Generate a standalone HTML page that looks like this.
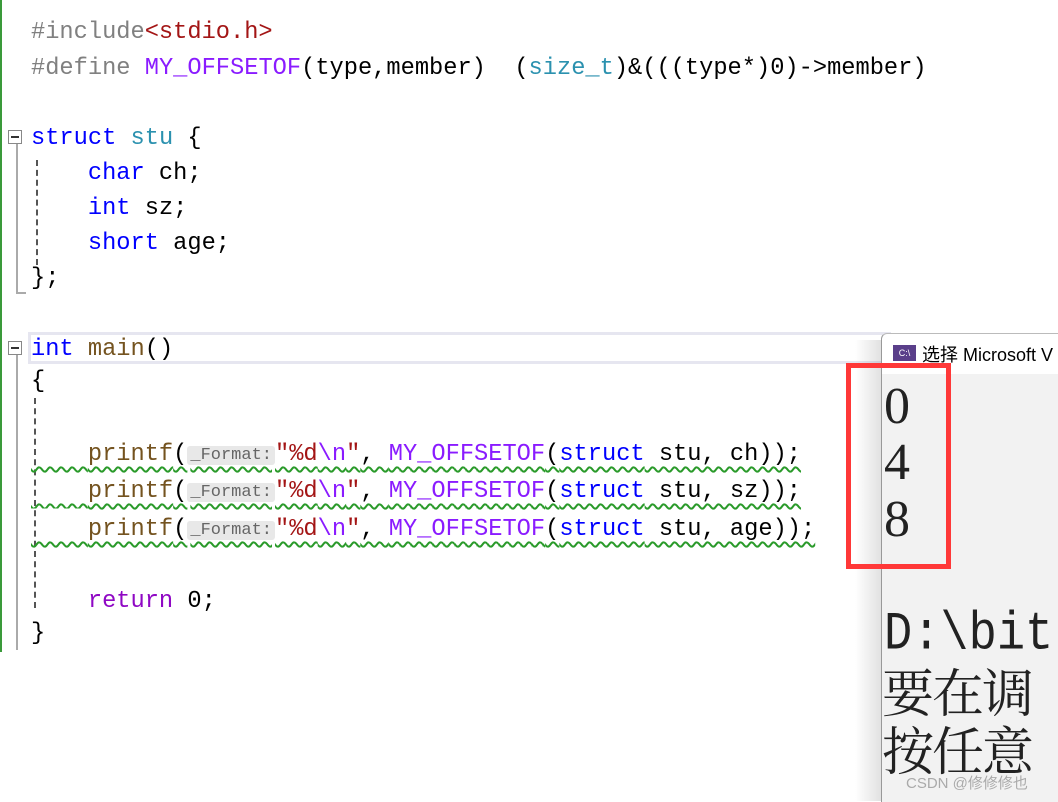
<!DOCTYPE html>
<html><head><meta charset="utf-8"><style>
body{margin:0;width:1058px;height:801px;background:#fff;position:relative;overflow:hidden;font-family:"Liberation Mono","Noto Sans CJK SC",monospace;}
.l{position:absolute;left:31px;font-size:23.7px;line-height:34px;white-space:pre;color:#000;}
.g{color:#808080}.s{color:#a31515}.m{color:#8a1bff}.k{color:#0000ff}.t{color:#2b91af}.f{color:#74531f}.r{color:#8f08c4}
.h{background:#e8e8e8;color:#666;font-size:17px;border-radius:3px;padding:0 3px;vertical-align:1px}
.sq{text-decoration:underline wavy #2a9a2a;text-decoration-thickness:1.5px;text-underline-offset:6px}
.fold{position:absolute;left:8px;width:14px;height:14px;border:1px solid #888;box-sizing:border-box;background:#fff}
.fold:after{content:"";position:absolute;left:2px;right:2px;top:5px;height:2px;background:#333}
.c{position:absolute;left:884px;color:#222;white-space:nowrap}
.n{font:52px/58px 'Liberation Serif',serif}
.z{font:52px/58px 'Noto Serif CJK SC','Noto Sans CJK SC',serif}
</style></head><body>
<div style="position:absolute;left:0;top:0;width:2px;height:652px;background:#3a9a3a"></div>
<div class="l" style="top:16px"><span class="g">#include</span><span class="s">&lt;stdio.h&gt;</span></div>
<div class="l" style="top:52px"><span class="g">#define</span> <span class="m">MY_OFFSETOF</span>(type,member)  (<span class="t">size_t</span>)&amp;(((type*)0)-&gt;member)</div>
<div class="fold" style="top:130px"></div>
<div style="position:absolute;left:16px;top:144px;width:2px;height:150px;background:#aaa"></div>
<div style="position:absolute;left:16px;top:292px;width:10px;height:2px;background:#aaa"></div>
<div style="position:absolute;left:36px;top:160px;height:105px;border-left:2px dashed #555"></div>
<div class="l" style="top:122px"><span class="k">struct</span> <span class="t">stu</span> {</div>
<div class="l" style="top:157px">    <span class="k">char</span> ch;</div>
<div class="l" style="top:192px">    <span class="k">int</span> sz;</div>
<div class="l" style="top:227px">    <span class="k">short</span> age;</div>
<div class="l" style="top:262px">};</div>
<div style="position:absolute;left:28px;top:332px;width:860px;height:26px;border:3px solid #e6e6f0;border-right:none"></div>
<div class="fold" style="top:341px"></div>
<div style="position:absolute;left:16px;top:355px;width:2px;height:295px;background:#aaa"></div>
<div style="position:absolute;left:34px;top:398px;height:210px;border-left:2px dashed #555"></div>
<div class="l" style="top:333px"><span class="k">int</span> <span class="f">main</span>()</div>
<div class="l" style="top:365px">{</div>
<div class="l sq" style="top:438px">    <span class="f">printf</span>(<span class="h">_Format:</span><span class="s">"%d<span class="m">\n</span>"</span>, <span class="m">MY_OFFSETOF</span>(<span class="k">struct</span> stu, ch));</div>
<div class="l sq" style="top:475px">    <span class="f">printf</span>(<span class="h">_Format:</span><span class="s">"%d<span class="m">\n</span>"</span>, <span class="m">MY_OFFSETOF</span>(<span class="k">struct</span> stu, sz));</div>
<div class="l sq" style="top:513px">    <span class="f">printf</span>(<span class="h">_Format:</span><span class="s">"%d<span class="m">\n</span>"</span>, <span class="m">MY_OFFSETOF</span>(<span class="k">struct</span> stu, age));</div>
<div class="l" style="top:585px">    <span class="r">return</span> 0;</div>
<div class="l" style="top:617px">}</div>
<div style="position:absolute;left:855px;top:340px;width:27px;height:461px;background:linear-gradient(90deg,rgba(0,0,0,0),rgba(0,0,0,0.12))"></div>
<div style="position:absolute;left:881px;top:333px;width:177px;height:468px;background:#f2f2f2;border-left:1px solid #999;border-top:1px solid #bbb;border-top-left-radius:6px"></div>
<div style="position:absolute;left:882px;top:334px;width:176px;height:40px;background:#fff;border-top-left-radius:6px"></div>
<div style="position:absolute;left:893px;top:345px;width:23px;height:16px;background:#5a3f8a;color:#fff;font:9px 'Liberation Sans';line-height:16px;text-align:center">C:\</div>
<div style="position:absolute;left:922px;top:341px;font:18px 'Liberation Sans','Noto Sans CJK SC',sans-serif;white-space:nowrap;color:#000">选择 Microsoft V</div>
<div class="c n" style="top:378px">0</div>
<div class="c n" style="top:434px">4</div>
<div class="c n" style="top:491px">8</div>
<div class="c" style="top:607px;font:47px/58px 'Liberation Mono',monospace;transform:scaleY(1.15);transform-origin:left center">D:\bit</div>
<div class="c z" style="top:661px;left:882px;letter-spacing:-2px">要在调</div>
<div class="c z" style="top:719px;left:882px;letter-spacing:-2px">按任意</div>
<div style="position:absolute;left:846px;top:363px;width:95px;height:196px;border:5px solid #ff3838"></div>
<div style="position:absolute;left:906px;top:772px;font:15px 'Liberation Sans','Noto Sans CJK SC',sans-serif;color:#aaa">CSDN @修修修也</div>
</body></html>
